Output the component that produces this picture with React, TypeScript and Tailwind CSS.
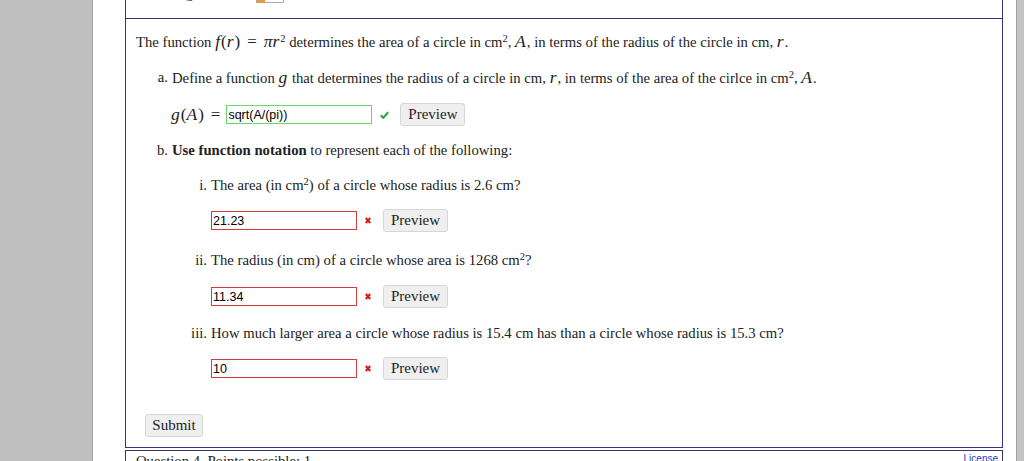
import type { ReactNode } from 'react'

const serif = "font-['Liberation_Serif',serif]"
const sans = "font-['Liberation_Sans',Arial,sans-serif]"

// MathJax-ish italic variables, a bit larger than body text
function V({ children }: { children: ReactNode }) {
  return <i className={`${serif} italic text-[17.5px] mr-[1px]`}>{children}</i>
}

function M({ children }: { children: ReactNode }) {
  return <span className="text-[17px]">{children}</span>
}

function Eq() {
  return <span className="text-[17px] mx-[7px]">=</span>
}

function Sq() {
  return <sup className="text-[10.5px]">2</sup>
}

function Check() {
  return (
    <svg width="9" height="8" viewBox="0 0 9 8" className="ml-[8px] mr-[11px]">
      <path d="M0.8 4.4 L3.3 6.8 L8.2 1.2" fill="none" stroke="#3aa63a" strokeWidth="2.2" />
    </svg>
  )
}

function Cross() {
  return (
    <svg width="6" height="7" viewBox="0 0 6 7" className="ml-[8px] mr-[12px]">
      <path d="M0.8 1 L5.2 6 M5.2 1 L0.8 6" fill="none" stroke="#d11" strokeWidth="2" />
    </svg>
  )
}

function Preview() {
  return (
    <button className={`${serif} h-[23px] w-[65px] bg-[#efefef] border border-[#d6d6d6] rounded-[3px] text-[15px] text-[#222] leading-none`}>
      Preview
    </button>
  )
}

function AnswerRow({ value, ok }: { value: string; ok?: boolean }) {
  return (
    <div className="flex items-center h-[23px]">
      <input
        readOnly
        value={value}
        className={`${sans} w-[146px] h-[19px] border ${ok ? 'border-[#66d966]' : 'border-[#d23c3c]'} px-[1px] text-[12.5px] text-black outline-none bg-white`}
      />
      {ok ? <Check /> : <Cross />}
      <Preview />
    </div>
  )
}

function Item({ mark, width, children, className = '' }: { mark: string; width: string; children: ReactNode; className?: string }) {
  return (
    <div className={`flex leading-[20px] h-[20px] whitespace-nowrap ${className}`}>
      <span className={`${width} text-right pr-[4px] shrink-0`}>{mark}</span>
      <span>{children}</span>
    </div>
  )
}

export default function App() {
  return (
    <div className={`${serif} flex h-[461px] overflow-hidden bg-[#c0c0c0] text-[14.7px] text-[#222]`}>
      <div className="w-[93px] shrink-0 bg-[#c0c0c0] border-r border-[#a3a3a3]" />

      <div className="flex-1 bg-white pl-[32px] pr-[13px] flow-root">
        {/* previous question, scrolled off */}
        <div className="h-[19px] border-x border-b border-[#34347e] overflow-hidden flex items-start">
          <span className="ml-[60px] -mt-[17px] leading-[20px]">g</span>
          <div className="ml-[63px] w-[28px] h-[3px] border-x border-b border-[#aaa] flex">
            <div className="w-[8px] bg-[#f39a1e]" />
          </div>
        </div>

        {/* current question */}
        <div className="h-[429px] border-x border-b border-[#34347e] pl-[10px] flow-root">
          <p className="mt-[12px] leading-[20px] h-[20px] whitespace-nowrap">
            The function <V>f</V><M>(</M><V>r</V><M>)</M><Eq /><V>πr</V><Sq /> determines the area of a circle in cm<Sq />, <V>A</V>, in terms of the radius of the circle in cm, <V>r</V>.
          </p>

          <Item mark="a." width="w-[36px]" className="mt-[16px]">
            Define a function <V>g</V> that determines the radius of a circle in cm, <V>r</V>, in terms of the area of the cirlce in cm<Sq />, <V>A</V>.
          </Item>

          <div className="mt-[16px] pl-[35px] flex items-center h-[23px]">
            <span className="-mr-[1px] whitespace-nowrap">
              <V>g</V><M>(</M><V>A</V><M>)</M><Eq />
            </span>
            <AnswerRow value="sqrt(A/(pi))" ok />
          </div>

          <Item mark="b." width="w-[36px]" className="mt-[14px]">
            <b>Use function notation</b> to represent each of the following:
          </Item>

          <div className="pl-[36px]">
            <Item mark="i." width="w-[39px]" className="mt-[15px]">
              The area (in cm<Sq />) of a circle whose radius is 2.6 cm?
            </Item>
            <div className="mt-[14px] pl-[39px]">
              <AnswerRow value="21.23" />
            </div>

            <Item mark="ii." width="w-[39px]" className="mt-[18px]">
              The radius (in cm) of a circle whose area is 1268 cm<Sq />?
            </Item>
            <div className="mt-[15px] pl-[39px]">
              <AnswerRow value="11.34" />
            </div>

            <Item mark="iii." width="w-[39px]" className="mt-[15px]">
              How much larger area a circle whose radius is 15.4 cm has than a circle whose radius is 15.3 cm?
            </Item>
            <div className="mt-[14px] pl-[39px]">
              <AnswerRow value="10" />
            </div>
          </div>

          <button className={`${serif} mt-[34px] ml-[9px] h-[23px] w-[58px] bg-[#efefef] border border-[#d6d6d6] rounded-[3px] text-[15px] text-[#222] leading-none`}>
            Submit
          </button>
        </div>

        {/* next question */}
        <div className="mt-[2px] h-[40px] border-x border-t border-[#34347e] pl-[10px] pr-[4px] flex justify-between items-start">
          <span className="leading-[20px]">Question 4. Points possible: 1</span>
          <span className={`${sans} text-[10px] text-[#1a3ccc] leading-[14px] mt-[1px]`}>License</span>
        </div>
      </div>

      <div className="w-[8px] shrink-0 bg-[#c4c4c4] border-l border-[#a3a3a3]" />
    </div>
  )
}
